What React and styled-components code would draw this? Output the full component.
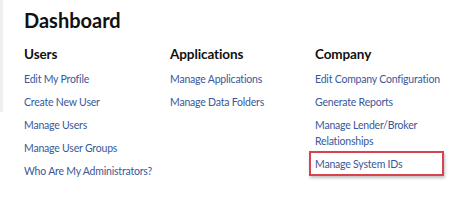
import React from 'react'
import styled, { createGlobalStyle } from 'styled-components'

const GlobalStyle = createGlobalStyle`
  html, body {
    margin: 0;
    padding: 0;
    background: #ffffff;
  }
  body {
    font-family: Lato, "Open Sans", sans-serif;
  }
`

const Page = styled.div`
  width: 474px;
  height: 219px;
  box-sizing: border-box;
  padding: 8px 24px 0 24px;
  background: linear-gradient(to right, #efefef 3px, #ffffff 3px) no-repeat;
  background-size: 100% 112px;
`

const Title = styled.h1`
  margin: 0;
  font-size: 20px;
  line-height: 24px;
  font-weight: 700;
  color: #111;
`

const Columns = styled.div`
  display: grid;
  grid-template-columns: 146px 145px 1fr;
  margin-top: 13px;
`

const Column = styled.div`
  display: flex;
  flex-direction: column;
`

const Heading = styled.h2`
  margin: 0 0 8px 0;
  font-size: 13.5px;
  line-height: 18px;
  font-weight: 700;
  letter-spacing: -0.1px;
  color: #111;
`

const LinkList = styled.ul`
  list-style: none;
  margin: 0;
  padding: 0;
  display: flex;
  flex-direction: column;
  gap: 7px;
`

const Item = styled.li`
  position: relative;
  width: ${(p) => (p.$narrow ? '110px' : 'auto')};
`

const Link = styled.a`
  font-size: 10.5px;
  line-height: 16px;
  letter-spacing: -0.2px;
  color: #38589a;
  text-decoration: none;
  display: block;
  white-space: ${(p) => (p.$wrap ? 'normal' : 'nowrap')};
`

const Highlight = styled.span`
  position: absolute;
  left: -6px;
  top: -5px;
  width: 135px;
  height: 25px;
  box-sizing: border-box;
  border: 2px solid #d8434f;
  box-shadow: 1px 2px 3px rgba(0, 0, 0, 0.25);
  pointer-events: none;
`

const columns = [
  {
    title: 'Users',
    links: ['Edit My Profile', 'Create New User', 'Manage Users', 'Manage User Groups', 'Who Are My Administrators?'],
  },
  {
    title: 'Applications',
    links: ['Manage Applications', 'Manage Data Folders'],
  },
  {
    title: 'Company',
    links: ['Edit Company Configuration', 'Generate Reports', 'Manage Lender/Broker Relationships', 'Manage System IDs'],
  },
]

const App = () => {
  return (
    <>
      <GlobalStyle />
      <Page>
        <Title>Dashboard</Title>
        <Columns>
          {columns.map((col) => (
            <Column key={col.title}>
              <Heading>{col.title}</Heading>
              <LinkList>
                {col.links.map((link) => {
                  const wrap = link.startsWith('Manage Lender')
                  return (
                    <Item key={link} $narrow={wrap}>
                      <Link href="#" $wrap={wrap}>{link}</Link>
                      {link === 'Manage System IDs' && <Highlight />}
                    </Item>
                  )
                })}
              </LinkList>
            </Column>
          ))}
        </Columns>
      </Page>
    </>
  )
}

export default App
